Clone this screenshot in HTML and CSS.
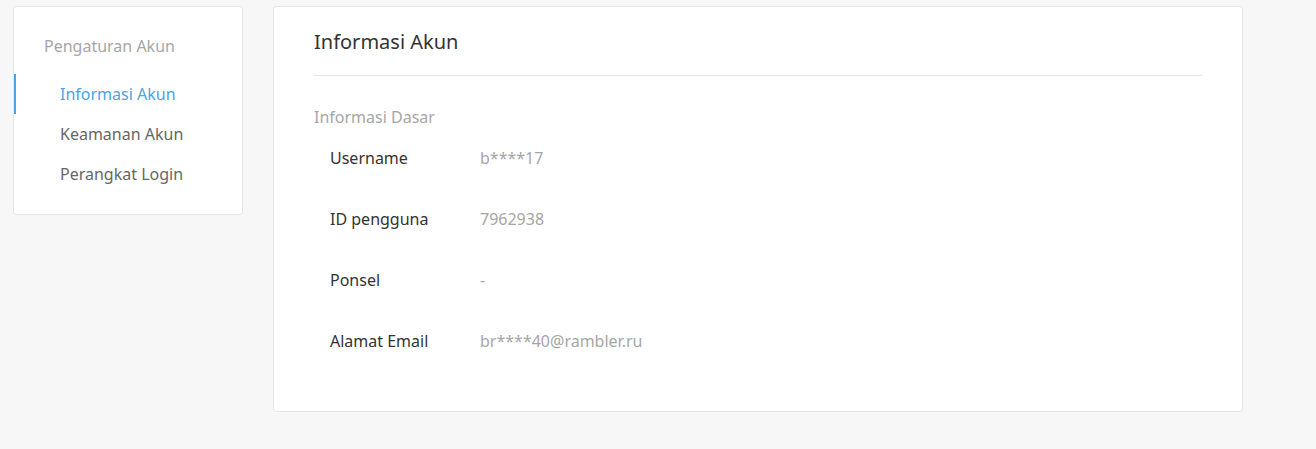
FILE: index.html
```html
<!DOCTYPE html>
<html lang="id">
<head>
<meta charset="utf-8">
<title>Informasi Akun</title>
<link rel="stylesheet" href="styles.css">
</head>
<body>
<div class="page">
  <aside class="sidebar">
    <div class="sidebar-title">Pengaturan Akun</div>
    <nav class="menu">
      <a class="menu-item active">Informasi Akun</a>
      <a class="menu-item">Keamanan Akun</a>
      <a class="menu-item">Perangkat Login</a>
    </nav>
  </aside>
  <main class="panel">
    <h1 class="panel-title">Informasi Akun</h1>
    <h2 class="section-title">Informasi Dasar</h2>
    <div class="rows">
      <div class="row"><span class="label">Username</span><span class="value">b****17</span></div>
      <div class="row"><span class="label">ID pengguna</span><span class="value">7962938</span></div>
      <div class="row"><span class="label">Ponsel</span><span class="value">-</span></div>
      <div class="row"><span class="label">Alamat Email</span><span class="value">br****40@rambler.ru</span></div>
    </div>
  </main>
</div>
</body>
</html>
```
FILE: styles.css
```css
* { box-sizing: border-box; }
html, body { margin: 0; padding: 0; }
body {
  background: #f7f7f7;
  font-family: "Noto Sans", "Open Sans", sans-serif;
  font-size: 16px;
  color: #333;
}
.page {
  display: flex;
  align-items: flex-start;
  gap: 30px;
  padding: 6px 0 0 13px;
}
.sidebar {
  width: 230px;
  background: #fff;
  border: 1px solid #e6e6e6;
  border-radius: 3px;
  padding: 19px 0 20px 0;
}
.sidebar-title {
  padding-left: 30px;
  line-height: 40px;
  color: #a6a6a6;
  margin-bottom: 8px;
}
.menu { display: flex; flex-direction: column; }
.menu-item {
  display: block;
  line-height: 40px;
  padding-left: 44px;
  color: #666;
  border-left: 2px solid transparent;
}
.menu-item.active {
  color: #4aa3e8;
  border-left-color: #4aa3e8;
}
.panel {
  width: 970px;
  height: 406px;
  background: #fff;
  border: 1px solid #e6e6e6;
  border-radius: 3px;
  padding: 0 40px;
}
.panel-title {
  margin: 0;
  font-size: 20px;
  font-weight: normal;
  line-height: 28px;
  padding: 21px 0 19px;
  border-bottom: 1px solid #e5e5e5;
  color: #333;
}
.section-title {
  margin: 30px 0 0;
  font-size: 16px;
  font-weight: normal;
  line-height: 22px;
  color: #a6a6a6;
}
.rows { padding-left: 16px; }
.row {
  display: flex;
  line-height: 21px;
  padding: 20px 0;
}
.label { width: 150px; color: #333; }
.value { color: #a6a6a6; }
```
